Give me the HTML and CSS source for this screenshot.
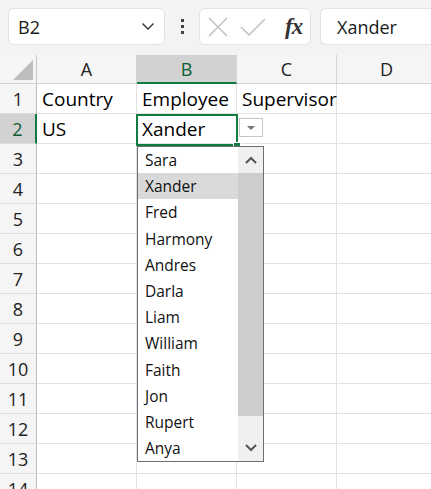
FILE: index.html
```html
<!DOCTYPE html>
<html lang="en">
<head>
    <meta charset="UTF-8">
    <title>Employee list</title>
    <link rel="stylesheet" href="styles.css">
</head>
<body>
    <div class="toolbar">
        <div class="namebox">
            <span>B2</span>
            <svg class="chev" width="14" height="9" viewBox="0 0 14 9"><path d="M1.5 1.5 L7 7 L12.5 1.5" fill="none" stroke="#333" stroke-width="1.4"/></svg>
        </div>
        <div class="kebab"><i></i><i></i><i></i></div>
        <div class="fxgroup">
            <svg width="20" height="20" viewBox="0 0 20 20"><path d="M1 1 L19 19 M19 1 L1 19" stroke="#bdbdbd" stroke-width="1.4" fill="none"/></svg>
            <svg width="26" height="18" viewBox="0 0 26 18"><path d="M1 9 L9 17 L25 1" stroke="#bdbdbd" stroke-width="1.4" fill="none"/></svg>
            <span class="fx">fx</span>
        </div>
        <div class="formula">Xander</div>
    </div>

    <div class="sheet">
        <div class="grid">
            <div class="corner"><span class="tri"></span></div>
            <div class="colhead">A</div>
            <div class="colhead selected">B</div>
            <div class="colhead">C</div>
            <div class="colhead">D</div>

            <div class="rowhead">1</div>
            <div class="cell">Country</div>
            <div class="cell">Employee</div>
            <div class="cell">Supervisor</div>
            <div class="cell"></div>

            <div class="rowhead selected">2</div>
            <div class="cell">US</div>
            <div class="cell">Xander</div>
            <div class="cell"></div>
            <div class="cell"></div>

            <div class="rowhead">3</div><div class="cell"></div><div class="cell"></div><div class="cell"></div><div class="cell"></div>
            <div class="rowhead">4</div><div class="cell"></div><div class="cell"></div><div class="cell"></div><div class="cell"></div>
            <div class="rowhead">5</div><div class="cell"></div><div class="cell"></div><div class="cell"></div><div class="cell"></div>
            <div class="rowhead">6</div><div class="cell"></div><div class="cell"></div><div class="cell"></div><div class="cell"></div>
            <div class="rowhead">7</div><div class="cell"></div><div class="cell"></div><div class="cell"></div><div class="cell"></div>
            <div class="rowhead">8</div><div class="cell"></div><div class="cell"></div><div class="cell"></div><div class="cell"></div>
            <div class="rowhead">9</div><div class="cell"></div><div class="cell"></div><div class="cell"></div><div class="cell"></div>
            <div class="rowhead">10</div><div class="cell"></div><div class="cell"></div><div class="cell"></div><div class="cell"></div>
            <div class="rowhead">11</div><div class="cell"></div><div class="cell"></div><div class="cell"></div><div class="cell"></div>
            <div class="rowhead">12</div><div class="cell"></div><div class="cell"></div><div class="cell"></div><div class="cell"></div>
            <div class="rowhead">13</div><div class="cell"></div><div class="cell"></div><div class="cell"></div><div class="cell"></div>
            <div class="rowhead">14</div><div class="cell"></div><div class="cell"></div><div class="cell"></div><div class="cell"></div>
        </div>

        <div class="active-cell"></div>
        <div class="fill-handle"></div>
        <div class="dd-btn">
            <svg width="10" height="6" viewBox="0 0 10 6"><path d="M1 1 L9 1 L5 5 Z" fill="#777"/></svg>
        </div>

        <div class="dropdown">
            <ul class="options">
                <li>Sara</li>
                <li class="hover">Xander</li>
                <li>Fred</li>
                <li>Harmony</li>
                <li>Andres</li>
                <li>Darla</li>
                <li>Liam</li>
                <li>William</li>
                <li>Faith</li>
                <li>Jon</li>
                <li>Rupert</li>
                <li>Anya</li>
            </ul>
            <div class="scrollbar">
                <div class="sb-btn">
                    <svg width="12" height="8" viewBox="0 0 12 8"><path d="M1 7 L6 2 L11 7" fill="none" stroke="#555" stroke-width="2"/></svg>
                </div>
                <div class="thumb"></div>
                <div class="track"></div>
                <div class="sb-btn">
                    <svg width="12" height="8" viewBox="0 0 12 8"><path d="M1 1 L6 6 L11 1" fill="none" stroke="#555" stroke-width="2"/></svg>
                </div>
            </div>
        </div>
    </div>
</body>
</html>
```

FILE: styles.css
```css
body {
    margin: 0;
    width: 431px;
    height: 489px;
    overflow: hidden;
    font-family: "Open Sans", "Noto Sans", sans-serif;
    background: #ffffff;
    color: #000;
}

/* formula bar */
.toolbar {
    height: 55px;
    box-sizing: border-box;
    background: #f3f3f3;
    display: flex;
    align-items: flex-start;
    padding: 8px 0 0 8px;
}
.namebox {
    width: 157px;
    height: 37px;
    box-sizing: border-box;
    background: #fff;
    border: 1px solid #e3e3e3;
    border-radius: 6px;
    display: flex;
    align-items: center;
    justify-content: space-between;
    padding: 0 9px 0 9px;
    font-size: 18px;
    color: #1a1a1a;
}
.kebab {
    width: 34px;
    height: 37px;
    display: flex;
    flex-direction: column;
    align-items: center;
    justify-content: center;
    gap: 3px;
}
.kebab i {
    display: block;
    width: 3px;
    height: 3px;
    background: #444;
}
.fxgroup {
    width: 112px;
    height: 37px;
    box-sizing: border-box;
    background: #fff;
    border: 1px solid #e3e3e3;
    border-radius: 6px;
    display: flex;
    align-items: center;
    padding: 0 0 0 8px;
    gap: 12px;
}
.fx {
    font-family: "Liberation Serif", serif;
    font-style: italic;
    font-weight: bold;
    font-size: 23px;
    color: #333;
    margin-left: 7px;
    letter-spacing: -1px;
}
.formula {
    margin-left: 9px;
    flex: 1;
    height: 37px;
    box-sizing: border-box;
    background: #fff;
    border: 1px solid #e3e3e3;
    border-right: none;
    border-radius: 6px 0 0 6px;
    display: flex;
    align-items: center;
    padding-left: 16px;
    font-size: 18px;
    color: #1a1a1a;
}

/* sheet grid */
.sheet {
    position: relative;
}
.grid {
    display: grid;
    grid-template-columns: 37px 100px 100px 100px 100px;
    grid-template-rows: 29px;
    grid-auto-rows: 30px;
}
.corner, .colhead, .rowhead {
    background: #f5f5f5;
    color: #222;
    font-size: 18px;
    box-sizing: border-box;
}
.corner {
    border-right: 1px solid #c8c8c8;
    border-bottom: 1px solid #d4d4d4;
    position: relative;
}
.tri {
    position: absolute;
    right: 3px;
    bottom: 3px;
    width: 0;
    height: 0;
    border-left: 20px solid transparent;
    border-bottom: 20px solid #bdbdbd;
}
.colhead {
    border-right: 1px solid #d4d4d4;
    border-bottom: 1px solid #d4d4d4;
    display: flex;
    align-items: center;
    justify-content: center;
}
.colhead.selected {
    background: #d2d2d2;
    color: #0e5c2f;
    border-bottom: 2px solid #107c41;
}
.rowhead {
    border-right: 1px solid #bdbdbd;
    border-bottom: 1px solid #dcdcdc;
    display: flex;
    align-items: center;
    justify-content: center;
}
.rowhead.selected {
    background: #d2d2d2;
    color: #0e5c2f;
    border-right: 2px solid #107c41;
}
.cell {
    box-sizing: border-box;
    border-right: 1px solid #e1e1e1;
    border-bottom: 1px solid #e1e1e1;
    font-size: 19px;
    padding: 0 0 1px 5px;
    display: flex;
    align-items: flex-end;
    white-space: nowrap;
}

/* selection + validation list */
.active-cell {
    position: absolute;
    left: 136px;
    top: 59px;
    width: 102px;
    height: 32px;
    box-sizing: border-box;
    border: 2px solid #107c41;
}
.fill-handle {
    position: absolute;
    left: 233px;
    top: 87px;
    width: 6px;
    height: 5px;
    background: #107c41;
    border: 1px solid #fff;
}
.dd-btn {
    position: absolute;
    left: 239px;
    top: 63px;
    width: 24px;
    height: 19px;
    box-sizing: border-box;
    background: #fff;
    border: 1px solid #c6c6c6;
    display: flex;
    align-items: center;
    justify-content: center;
}
.dropdown {
    position: absolute;
    left: 137px;
    top: 91px;
    width: 127px;
    height: 316px;
    box-sizing: border-box;
    background: #fff;
    border: 1px solid #6e6e6e;
    display: flex;
}
.options {
    list-style: none;
    margin: 0;
    padding: 0;
    width: 100px;
}
.options li {
    height: 26.2px;
    line-height: 26px;
    padding-left: 7px;
    font-size: 15.5px;
    color: #111;
}
.options li.hover {
    background: #d9d9d9;
}
.scrollbar {
    flex: 1;
    background: #f0f0f0;
    display: flex;
    flex-direction: column;
}
.sb-btn {
    height: 26px;
    display: flex;
    align-items: center;
    justify-content: center;
}
.thumb {
    height: 243px;
    background: #cdcdcd;
}
.track {
    flex: 1;
}
```
